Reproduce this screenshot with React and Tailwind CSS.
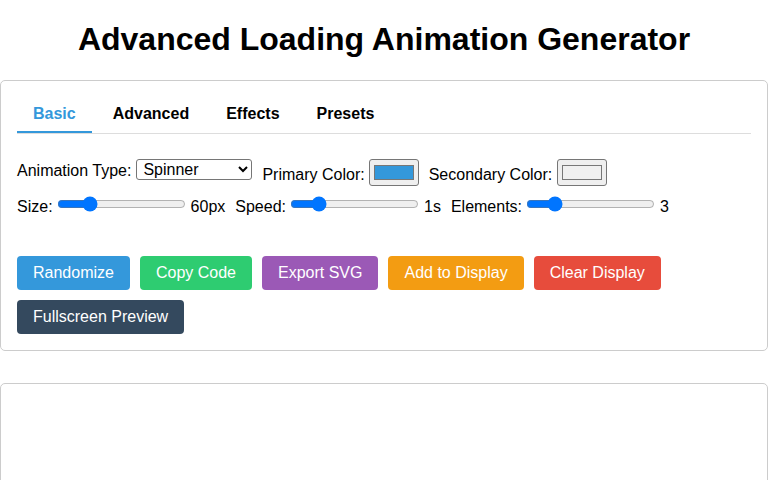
import { useState } from 'react'

const tabs = ['Basic', 'Advanced', 'Effects', 'Presets']

const buttons = [
  { label: 'Randomize', color: 'bg-[#3498db]' },
  { label: 'Copy Code', color: 'bg-[#2ecc71]' },
  { label: 'Export SVG', color: 'bg-[#9b59b6]' },
  { label: 'Add to Display', color: 'bg-[#f39c12]' },
  { label: 'Clear Display', color: 'bg-[#e74c3c]' },
  { label: 'Fullscreen Preview', color: 'bg-[#34495e]' },
]

export default function App() {
  const [active, setActive] = useState('Basic')
  const [size, setSize] = useState(60)
  const [speed, setSpeed] = useState(1)
  const [elements, setElements] = useState(3)

  return (
    <div className="h-screen bg-white text-black font-['Liberation_Sans',Arial,sans-serif] text-[16px] overflow-hidden">
      <h1 className="pt-[21px] pb-[22px] text-center text-[32px] leading-[37px] font-bold">
        Advanced Loading Animation Generator
      </h1>

      <div className="border border-[#cccccc] rounded-[5px] p-4">
        <div className="flex gap-[5px] border-b border-[#dddddd]">
          {tabs.map((t) => (
            <button
              key={t}
              onClick={() => setActive(t)}
              className={
                t === active
                  ? 'px-4 pt-[8px] pb-[8px] leading-[18px] font-bold border-b-2 border-[#3498db] text-[#3498db]'
                  : 'px-4 pt-[8px] pb-[8px] leading-[18px] font-bold border-b-2 border-transparent text-black'
              }
            >
              {t}
            </button>
          ))}
        </div>

        <div className="mt-[25px] flex items-start">
          <div className="flex items-start mr-[10px]">
            <label className="leading-[18px] pt-[3px] mr-[5px]">Animation Type:</label>
            <select className="w-[116px] h-[21px] leading-[18px] border border-[#767676] rounded-[3px] bg-white pl-[2px]">
              <option>Spinner</option>
              <option>Dots</option>
              <option>Bars</option>
              <option>Pulse</option>
            </select>
          </div>
          <div className="flex items-start mr-[10px]">
            <label className="leading-[18px] pt-[7px] mr-[4px]">Primary Color:</label>
            <input
              type="color"
              defaultValue="#3498db"
              className="w-[50px] h-[27px] border border-[#767676] rounded-[3px] bg-[#efefef] px-[2px] py-[1px]"
            />
          </div>
          <div className="flex items-start">
            <label className="leading-[18px] pt-[7px] mr-[5px]">Secondary Color:</label>
            <input
              type="color"
              defaultValue="#f0f0f0"
              className="w-[50px] h-[27px] border border-[#767676] rounded-[3px] bg-[#efefef] px-[2px] py-[1px]"
            />
          </div>
        </div>

        <div className="mt-[10px] flex items-start">
          <div className="flex items-start mr-[10px]">
            <label className="leading-[18px] pt-[2px] mr-[4px]">Size:</label>
            <input
              type="range"
              min="20"
              max="200"
              value={size}
              onChange={(e) => setSize(e.target.value)}
              className="w-[129px] h-[16px]"
            />
            <span className="leading-[18px] pt-[2px] ml-[5px]">{size}px</span>
          </div>
          <div className="flex items-start mr-[10px]">
            <label className="leading-[18px] pt-[2px] mr-[4px]">Speed:</label>
            <input
              type="range"
              min="0.1"
              max="5"
              step="0.1"
              value={speed}
              onChange={(e) => setSpeed(e.target.value)}
              className="w-[129px] h-[16px]"
            />
            <span className="leading-[18px] pt-[2px] ml-[5px]">{speed}s</span>
          </div>
          <div className="flex items-start">
            <label className="leading-[18px] pt-[2px] mr-[4px]">Elements:</label>
            <input
              type="range"
              min="1"
              max="12"
              value={elements}
              onChange={(e) => setElements(e.target.value)}
              className="w-[129px] h-[16px]"
            />
            <span className="leading-[18px] pt-[2px] ml-[5px]">{elements}</span>
          </div>
        </div>

        <div className="mt-[40px] flex flex-wrap gap-[10px]">
          {buttons.map((b) => (
            <button
              key={b.label}
              className={`${b.color} text-white px-4 py-2 leading-[18px] rounded-[4px]`}
            >
              {b.label}
            </button>
          ))}
        </div>
      </div>

      <div className="mt-[32px] h-[300px] border border-[#cccccc] rounded-[5px]"></div>
    </div>
  )
}
